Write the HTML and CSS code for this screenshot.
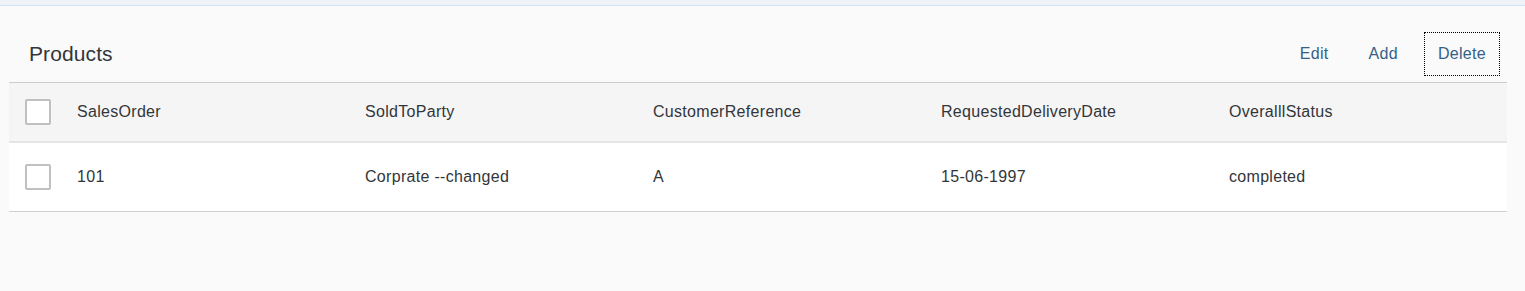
FILE: index.html
```html
<!DOCTYPE html>
<html>
<head>
<meta charset="utf-8">
<link rel="stylesheet" href="styles.css">
</head>
<body>
<div class="topbar"></div>
<div class="page">
  <div class="toolbar">
    <h1 class="title">Products</h1>
    <div class="actions">
      <button class="btn">Edit</button>
      <button class="btn">Add</button>
      <button class="btn btn-focus">Delete</button>
    </div>
  </div>
  <div class="table">
    <div class="row head">
      <div class="cell sel"><span class="check"></span></div>
      <div class="cell">SalesOrder</div>
      <div class="cell">SoldToParty</div>
      <div class="cell">CustomerReference</div>
      <div class="cell">RequestedDeliveryDate</div>
      <div class="cell">OveralllStatus</div>
      <div class="cell"></div>
    </div>
    <div class="row body">
      <div class="cell sel"><span class="check"></span></div>
      <div class="cell">101</div>
      <div class="cell">Corprate --changed</div>
      <div class="cell">A</div>
      <div class="cell">15-06-1997</div>
      <div class="cell">completed</div>
      <div class="cell"></div>
    </div>
  </div>
</div>
</body>
</html>
```
FILE: styles.css
```css
html, body {
  margin: 0;
  padding: 0;
  background: #fafafa;
  font-family: "Liberation Sans", Arial, sans-serif;
  color: #32363a;
}
.topbar {
  height: 5px;
  background: #eef3f8;
  border-bottom: 1px solid #d3e2f2;
}
.page {
  padding: 0 18px 0 9px;
}
.toolbar {
  height: 56px;
  padding: 20px 7px 0 20px;
  display: flex;
  align-items: center;
  justify-content: space-between;
}
.title {
  margin: 0;
  font-size: 21px;
  font-weight: normal;
  letter-spacing: 0.1px;
  color: #32363a;
}
.actions {
  display: flex;
  align-items: center;
  gap: 12px;
}
.btn {
  height: 44px;
  padding: 0 13px;
  border: 1px solid transparent;
  background: transparent;
  font-family: "Liberation Sans", Arial, sans-serif;
  font-size: 16px;
  letter-spacing: 0.3px;
  color: #346187;
  cursor: pointer;
}
.btn-focus {
  border: 1px dotted #000;
}
.table {
  border-top: 1px solid #cccccc;
}
.row {
  display: grid;
  grid-template-columns: 56px 288px 288px 288px 288px 288px 1fr;
  align-items: center;
  font-size: 16px;
  letter-spacing: 0.3px;
}
.head {
  height: 58px;
  background: #f5f5f5;
  border-bottom: 2px solid #e5e5e5;
}
.body {
  height: 68px;
  background: #ffffff;
  border-bottom: 1px solid #cfcfcf;
}
.cell {
  padding-left: 12px;
  white-space: nowrap;
}
.cell.sel {
  padding-left: 16px;
  display: flex;
  align-items: center;
}
.check {
  display: block;
  width: 22px;
  height: 22px;
  border: 2px solid #c0c0c0;
  border-radius: 2px;
  background: #fff;
}
```
